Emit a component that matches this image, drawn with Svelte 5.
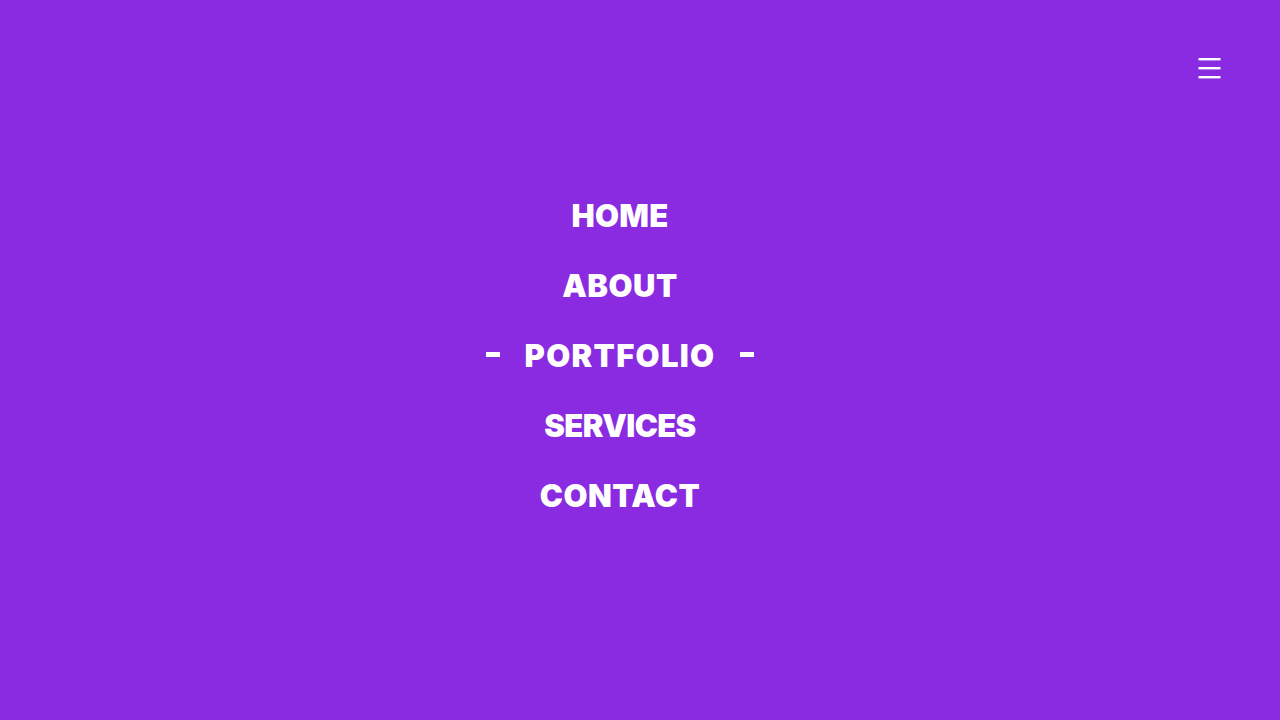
<script>
  const links = [
    { name: 'Home', tracking: 0.3 },
    { name: 'About', tracking: 0.5 },
    { name: 'Portfolio', tracking: 1.3, active: true },
    { name: 'Services', tracking: -0.6 },
    { name: 'Contact', tracking: 0.5 },
  ]
</script>

<style>
  :global(body) {
    background: #8a2be2;
    font-family: "Inter", "Liberation Sans", sans-serif;
  }

  .page {
    height: 720px;
    overflow: hidden;
    color: #fff;
    display: flex;
    flex-direction: column;
  }

  header {
    height: 180px;
    display: flex;
    justify-content: flex-end;
    align-items: flex-start;
    padding: 57px 59px 0 0;
    box-sizing: border-box;
  }

  .burger {
    display: block;
    width: 23px;
    height: 22px;
    padding: 0;
    border: 0;
    background: transparent;
  }

  svg {
    display: block;
  }

  nav {
    width: 1240px;
    display: flex;
    flex-direction: column;
  }

  a {
    height: 70px;
    display: flex;
    justify-content: center;
    align-items: center;
    gap: 25px;
    color: inherit;
    text-decoration: none;
    text-transform: uppercase;
    font-size: 31px;
    font-weight: 900;
  }

  .dash {
    width: 14px;
    height: 5px;
    margin-bottom: 2px;
    background: #fff;
  }
</style>

<div class="page">
  <header>
    <button class="burger" aria-label="Menu">
      <svg width="23" height="22" viewBox="0 0 23 22" fill="#fff">
        <rect x="0.5" y="1" width="22" height="2.4" />
        <rect x="0.5" y="10" width="22" height="2.4" />
        <rect x="0.5" y="19" width="22" height="2.4" />
      </svg>
    </button>
  </header>
  <nav>
    {#each links as link}
      <a href="#{link.name.toLowerCase()}">
        {#if link.active}<span class="dash"></span>{/if}
        <span style="letter-spacing: {link.tracking}px">{link.name}</span>
        {#if link.active}<span class="dash"></span>{/if}
      </a>
    {/each}
  </nav>
</div>
